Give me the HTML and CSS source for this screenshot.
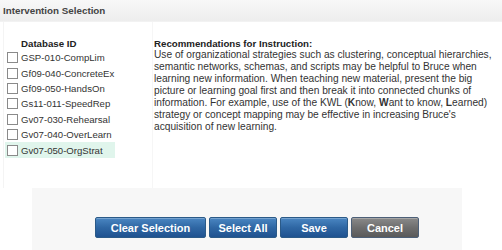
FILE: index.html
```html
<!DOCTYPE html>
<html>
<head>
<meta charset="utf-8">
<link rel="stylesheet" href="styles.css">
</head>
<body>
<div class="dialog">
  <div class="header">Intervention Selection</div>
  <div class="main">
    <div class="left">
      <div class="heading db-heading">Database ID</div>
      <ul class="list">
        <li class="row"><span class="box"></span><span class="label">GSP-010-CompLim</span></li>
        <li class="row"><span class="box"></span><span class="label">Gf09-040-ConcreteEx</span></li>
        <li class="row"><span class="box"></span><span class="label">Gf09-050-HandsOn</span></li>
        <li class="row"><span class="box"></span><span class="label">Gs11-011-SpeedRep</span></li>
        <li class="row"><span class="box"></span><span class="label">Gv07-030-Rehearsal</span></li>
        <li class="row"><span class="box"></span><span class="label">Gv07-040-OverLearn</span></li>
        <li class="row active"><span class="box"></span><span class="label">Gv07-050-OrgStrat</span></li>
      </ul>
    </div>
    <div class="right">
      <div class="heading">Recommendations for Instruction:</div>
      <p class="text">Use of organizational strategies such as clustering, conceptual hierarchies, semantic networks, schemas, and scripts may be helpful to Bruce when learning new information. When teaching new material, present the big picture or learning goal first and then break it into connected chunks of information. For example, use of the KWL (<span class="em">K</span>now, <span class="em">W</span>ant to know, <span class="em">L</span>earned) strategy or concept mapping may be effective in increasing Bruce's acquisition of new learning.</p>
    </div>
  </div>
  <div class="footer">
    <div class="buttons">
      <button class="btn btn-wide">Clear Selection</button>
      <button class="btn">Select All</button>
      <button class="btn">Save</button>
      <button class="btn btn-gray">Cancel</button>
    </div>
  </div>
</div>
</body>
</html>
```

FILE: styles.css
```css
html, body {
  margin: 0;
  padding: 0;
  background: #ffffff;
}
body {
  width: 502px;
  height: 250px;
  overflow: hidden;
  font-family: "Liberation Sans", Arial, sans-serif;
  color: #333333;
}
.dialog {
  width: 502px;
  height: 250px;
  display: flex;
  flex-direction: column;
}
.header {
  height: 22px;
  line-height: 22px;
  padding-left: 3px;
  font-size: 9.8px;
  font-weight: bold;
  color: #444444;
  background: linear-gradient(#f8f8f8, #ededed);
  border-bottom: 1px solid #f2f2f2;
  box-sizing: border-box;
}
.main {
  display: flex;
  height: 166px;
}
.left {
  width: 150px;
  flex: none;
  padding-top: 16px;
  box-sizing: border-box;
  border-right: 1px solid #f6f6f6;
  border-left: 1px solid #f4f4f4;
  margin-left: 3px;
}
.heading {
  font-size: 9.7px;
  font-weight: bold;
  line-height: 11px;
  color: #222222;
}
.db-heading {
  padding-left: 17px;
}
.list {
  list-style: none;
  margin: 0;
  padding: 0;
  margin-top: 1px;
}
.row {
  display: flex;
  align-items: center;
  height: 15.4px;
  width: 110px;
  margin-left: 1px;
  padding-left: 2px;
  box-sizing: border-box;
  font-size: 9.6px;
  color: #333333;
}
.row.active {
  background: #e0f5ec;
}
.box {
  width: 9px;
  height: 9px;
  border: 1px solid #8a8a8a;
  background: #ffffff;
  flex: none;
  margin-right: 3px;
}
.right {
  flex: 1;
  padding-top: 16px;
  padding-left: 1px;
  padding-right: 0;
}
.text {
  margin: 0;
  font-size: 10.2px;
  line-height: 12px;
  color: #333333;
}
.em {
  font-weight: bold;
}
.footer {
  margin-left: 32px;
  width: 430px;
  flex: 1;
  background: #f7f7f7;
  padding-top: 29px;
  box-sizing: border-box;
}
.buttons {
  display: flex;
  gap: 3px;
  padding-left: 63px;
}
.btn {
  width: 68px;
  height: 21px;
  padding: 0;
  font-family: "Liberation Sans", Arial, sans-serif;
  font-size: 11px;
  font-weight: bold;
  color: #ffffff;
  border: 1px solid #2b5a88;
  border-radius: 2px;
  background: linear-gradient(#4a86c2, #2f67a4 50%, #1f5290);
  box-shadow: inset 0 1px 0 rgba(255,255,255,0.25);
}
.btn-wide {
  width: 111px;
}
.btn-gray {
  border-color: #4d6078;
  background: linear-gradient(#8a8a8a, #6e6e6e 50%, #5a5a5a);
}
```
